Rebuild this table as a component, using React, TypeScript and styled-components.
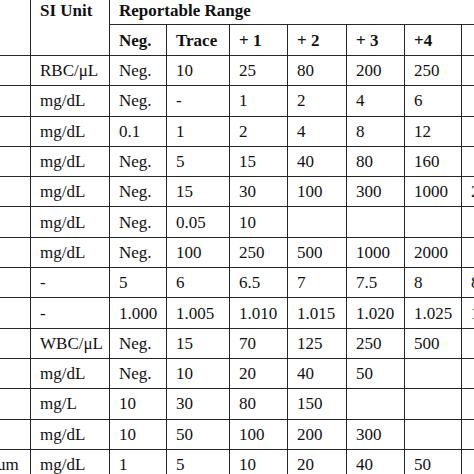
import React from "react";
import styled, { createGlobalStyle } from "styled-components";

const GlobalStyle = createGlobalStyle`
  html, body {
    margin: 0;
    padding: 0;
    background: #ffffff;
    overflow: hidden;
  }
`;

const Page = styled.div`
  width: 474px;
  height: 474px;
  overflow: hidden;
  background: #ffffff;
`;

// the screenshot is a crop of a wider table, so it starts left of and above the view
const Table = styled.table`
  margin: -5px 0 0 -49px;
  width: 570px;
  table-layout: fixed;
  border-collapse: collapse;
  font-family: "Liberation Serif", "Times New Roman", serif;
  font-size: 17px;
  line-height: 19px;
  color: #111111;
`;

const HeadRow = styled.tr<{ $h: number }>`
  height: ${(p) => p.$h}px;
`;

const Row = styled.tr`
  height: 30.3px;
`;

const HeadCell = styled.th<{ $top?: boolean }>`
  border: 1px solid #262626;
  padding: ${(p) => (p.$top ? "5px" : "0")} 0 0 9px;
  text-align: left;
  font-weight: 700;
  vertical-align: ${(p) => (p.$top ? "top" : "middle")};
  white-space: nowrap;
  overflow: hidden;
`;

const Cell = styled.td`
  border: 1px solid #262626;
  padding: 0 0 0 9px;
  text-align: left;
  vertical-align: middle;
  white-space: nowrap;
  overflow: hidden;
`;

const widths = [79, 79, 57, 63, 58, 59, 58, 57, 60];

type Line = { name: string; unit: string; values: string[] };

const rows: Line[] = [
  { name: "BLD", unit: "RBC/μL", values: ["Neg.", "10", "25", "80", "200", "250", ""] },
  { name: "BIL", unit: "mg/dL", values: ["Neg.", "-", "1", "2", "4", "6", ""] },
  { name: "URO", unit: "mg/dL", values: ["0.1", "1", "2", "4", "8", "12", ""] },
  { name: "KET", unit: "mg/dL", values: ["Neg.", "5", "15", "40", "80", "160", ""] },
  { name: "PRO", unit: "mg/dL", values: ["Neg.", "15", "30", "100", "300", "1000", "2000"] },
  { name: "NIT", unit: "mg/dL", values: ["Neg.", "0.05", "10", "", "", "", ""] },
  { name: "GLU", unit: "mg/dL", values: ["Neg.", "100", "250", "500", "1000", "2000", ""] },
  { name: "pH", unit: "-", values: ["5", "6", "6.5", "7", "7.5", "8", "8.5"] },
  { name: "SG", unit: "-", values: ["1.000", "1.005", "1.010", "1.015", "1.020", "1.025", "1.030"] },
  { name: "LEU", unit: "WBC/μL", values: ["Neg.", "15", "70", "125", "250", "500", ""] },
  { name: "ASC", unit: "mg/dL", values: ["Neg.", "10", "20", "40", "50", "", ""] },
  { name: "MAL", unit: "mg/L", values: ["10", "30", "80", "150", "", "", ""] },
  { name: "CRE", unit: "mg/dL", values: ["10", "50", "100", "200", "300", "", ""] },
  { name: "Calcium", unit: "mg/dL", values: ["1", "5", "10", "20", "40", "50", ""] },
];

const levels = ["Neg.", "Trace", "+ 1", "+ 2", "+ 3", "+4", ""];

const App: React.FC = () => {
  return (
    <Page>
      <GlobalStyle />
      <Table>
        <colgroup>
          {widths.map((w, i) => (
            <col key={i} style={{ width: w }} />
          ))}
        </colgroup>
        <thead>
          <HeadRow $h={29}>
            <HeadCell rowSpan={2} $top>
              Test
            </HeadCell>
            <HeadCell rowSpan={2} $top>
              SI Unit
            </HeadCell>
            <HeadCell colSpan={7}>Reportable Range</HeadCell>
          </HeadRow>
          <HeadRow $h={31}>
            {levels.map((l, i) => (
              <HeadCell key={i}>{l}</HeadCell>
            ))}
          </HeadRow>
        </thead>
        <tbody>
          {rows.map((r, i) => (
            <Row key={i}>
              <Cell>{r.name}</Cell>
              <Cell>{r.unit}</Cell>
              {r.values.map((v, j) => (
                <Cell key={j}>{v}</Cell>
              ))}
            </Row>
          ))}
        </tbody>
      </Table>
    </Page>
  );
};

export default App;
